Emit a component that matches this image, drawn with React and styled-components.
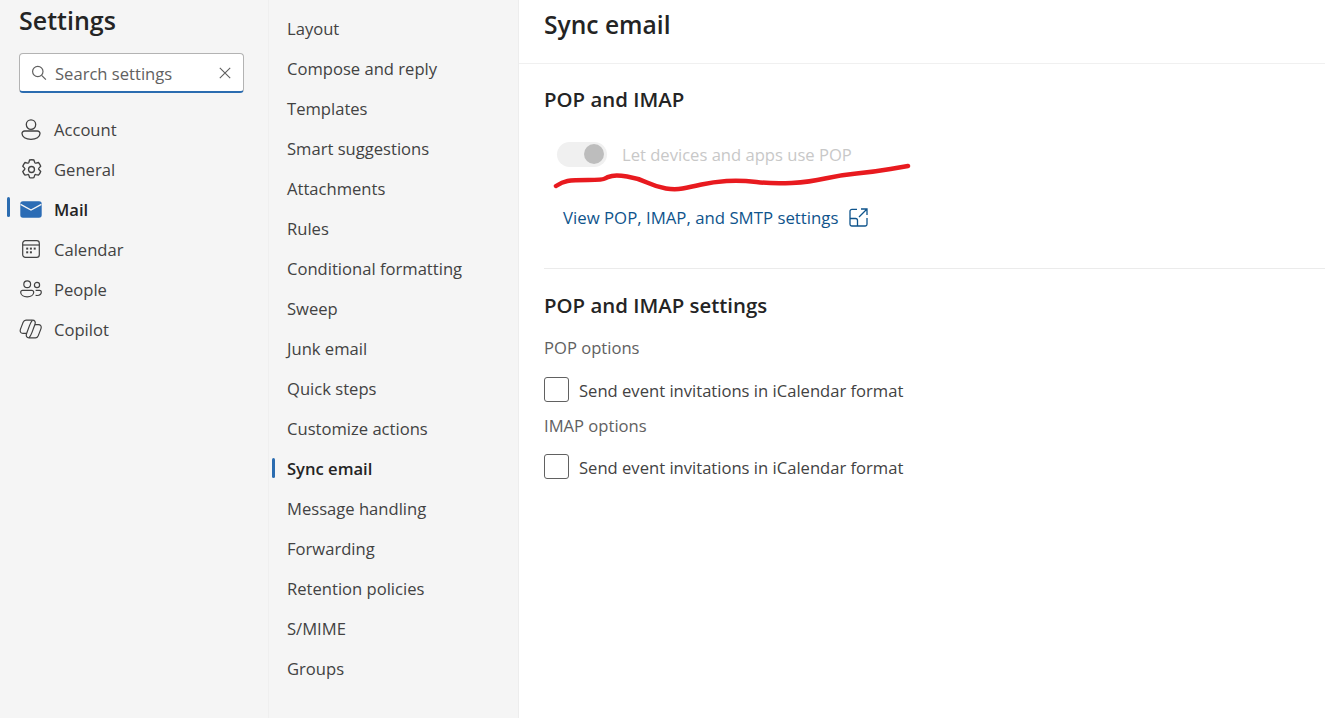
import styled, { createGlobalStyle } from 'styled-components';

const leftItems = [
  { label: 'Account', icon: <AccountIcon /> },
  { label: 'General', icon: <GearIcon /> },
  { label: 'Mail', icon: <MailIcon />, active: true },
  { label: 'Calendar', icon: <CalendarIcon /> },
  { label: 'People', icon: <PeopleIcon /> },
  { label: 'Copilot', icon: <CopilotIcon /> },
];

const midItems = [
  'Layout', 'Compose and reply', 'Templates', 'Smart suggestions', 'Attachments', 'Rules',
  'Conditional formatting', 'Sweep', 'Junk email', 'Quick steps', 'Customize actions',
  'Sync email', 'Message handling', 'Forwarding', 'Retention policies', 'S/MIME', 'Groups',
];

// hand drawn red line, points follow the marker stroke in the picture
const scribblePoints = [
  [6, 26], [12, 22], [23, 20], [53, 20], [57, 17], [67, 15], [87, 18], [107, 27], [125, 30],
  [140, 27], [163, 22], [190, 20], [223, 24], [260, 22], [290, 15], [323, 12], [358, 6],
];

function smoothPath(points) {
  let d = `M${points[0][0]} ${points[0][1]}`;
  for (let i = 1; i < points.length - 1; i++) {
    const mx = (points[i][0] + points[i + 1][0]) / 2;
    const my = (points[i][1] + points[i + 1][1]) / 2;
    d += `Q${points[i][0]} ${points[i][1]} ${mx} ${my}`;
  }
  const last = points[points.length - 1];
  return `${d}L${last[0]} ${last[1]}`;
}

function AccountIcon() {
  return (
    <svg width="20" height="21" viewBox="0 0 20 21" fill="none" stroke="#424242" strokeWidth="1.3">
      <circle cx="10" cy="5.6" r="4.7" />
      <path d="M3.6 12h12.8a2.6 2.6 0 0 1 2.6 2.6c0 3.4-3.8 5.7-9 5.7s-9-2.3-9-5.7A2.6 2.6 0 0 1 3.6 12z" />
    </svg>
  );
}

function GearIcon() {
  return (
    <svg width="23" height="23" viewBox="0 0 24 24" fill="none" stroke="#424242" strokeWidth="1.4" strokeLinejoin="round">
      <path d="M12.2 1.8c.8 0 1.6.1 2.3.3l.9 2.6c.2.5.8.8 1.3.6l2.6-.6c1 1.1 1.8 2.4 2.3 3.9l-1.9 2c-.4.4-.4 1 0 1.4l1.9 2c-.5 1.5-1.3 2.8-2.3 3.9l-2.6-.6c-.5-.2-1.1.1-1.3.6l-.9 2.6c-1.5.4-3 .4-4.5 0l-.8-2.6c-.2-.5-.8-.8-1.3-.6l-2.7.6c-1-1.1-1.8-2.4-2.3-3.9l1.9-2c.4-.4.4-1 0-1.4l-1.9-2c.5-1.5 1.3-2.8 2.3-3.9l2.7.6c.5.2 1.1-.1 1.3-.6l.8-2.6c.7-.2 1.4-.3 2.2-.3z" />
      <circle cx="12" cy="12" r="3.1" />
    </svg>
  );
}

function MailIcon() {
  return (
    <svg width="22" height="17" viewBox="0 0 22 17">
      <path fill="#2b6cb5" d="M3 .2h16A2.7 2.7 0 0 1 21.7 3v11a2.7 2.7 0 0 1-2.7 2.7H3A2.7 2.7 0 0 1 .3 14V3A2.7 2.7 0 0 1 3 .2z" />
      <path fill="none" stroke="#f5f5f5" strokeWidth="1.3" d="M.6 3.4 11 9l10.4-5.6" />
    </svg>
  );
}

function CalendarIcon() {
  return (
    <svg width="18" height="18" viewBox="0 0 18 18" fill="none" stroke="#424242" strokeWidth="1.2">
      <rect x=".7" y=".7" width="16.6" height="16.6" rx="2.6" />
      <path d="M.7 5h16.6" />
      <g fill="#424242" stroke="none">
        <rect x="7.9" y="7.6" width="2" height="2" />
        <rect x="11.7" y="7.6" width="2" height="2" />
        <rect x="4.2" y="7.6" width="2" height="2" />
        <rect x="4.2" y="11.3" width="2" height="2" />
        <rect x="7.9" y="11.3" width="2" height="2" />
      </g>
    </svg>
  );
}

function PeopleIcon() {
  return (
    <svg width="22" height="18" viewBox="0 0 22 18" fill="none" stroke="#424242" strokeWidth="1.2">
      <circle cx="7.2" cy="4.2" r="3.4" />
      <circle cx="17" cy="5" r="2.6" />
      <path d="M2.5 10.4h9.4a1.8 1.8 0 0 1 1.8 1.8c0 2.8-2.8 4.6-6.5 4.6S.7 15 .7 12.2a1.8 1.8 0 0 1 1.8-1.8z" />
      <path d="M15.6 15.4c.5.1 1 .1 1.5.1 2.8 0 4.2-1.5 4.2-3.4 0-1-.7-1.7-1.7-1.7h-4" />
    </svg>
  );
}

function CopilotIcon() {
  return (
    <svg width="24" height="20" viewBox="0 0 24 20" fill="none" stroke="#424242" strokeWidth="1.2" strokeLinejoin="round">
      <path d="M13.5 1.2H7C5.4 1.2 4.6 2.2 4 3.6L1.4 10.4C.6 12.6 1.8 14.4 4 14.4H7.5" />
      <path d="M13.5 1.2C15.8 1.2 16.8 3 16 5.2L13 13.4C12.2 15.6 11.5 17 10 18.8" />
      <path d="M10 18.8H16.5C18 18.8 18.8 17.8 19.4 16.4L22 9.6C22.8 7.4 21.6 5.6 19.4 5.6H16" />
      <path d="M10 18.8C7.7 18.8 6.7 17 7.5 14.8L10.5 6.6C11.3 4.4 12 3 13.5 1.2" />
    </svg>
  );
}

function SearchIcon() {
  return (
    <svg width="16" height="16" viewBox="0 0 16 16" fill="none" stroke="#5f5f5f" strokeWidth="1.2">
      <circle cx="6.8" cy="6.5" r="5.2" />
      <path d="m10.6 10.4 4.3 4.3" />
    </svg>
  );
}

function CloseIcon() {
  return (
    <svg width="12" height="12" viewBox="0 0 12 12" fill="none" stroke="#5f5f5f" strokeWidth="1.1">
      <path d="m.8.8 10.4 10.4M11.2.8.8 11.2" />
    </svg>
  );
}

function ExternalIcon() {
  return (
    <svg width="19" height="19" viewBox="0 0 19 19" fill="none" stroke="#0f548c" strokeWidth="1.3">
      <path d="M8 1.3H3A2 2 0 0 0 1 3.3v13A1.7 1.7 0 0 0 2.7 18h13.6a1.7 1.7 0 0 0 1.7-1.7V10" />
      <path d="M1 10.5h5.5a2 2 0 0 1 2 2V18" />
      <path d="M12 1h6v6M18 1l-8 8" />
    </svg>
  );
}

export default function App() {
  return (
    <>
      <GlobalStyle />
      <Page>
        <SideColumn>
          <SettingsTitle>Settings</SettingsTitle>
          <SearchBox>
            <SearchIcon />
            <SearchText>Search settings</SearchText>
            <CloseIcon />
          </SearchBox>
          <SideNav>
            {leftItems.map(item => (
              <SideItem key={item.label} $active={item.active}>
                <IconSlot>{item.icon}</IconSlot>
                {item.label}
              </SideItem>
            ))}
          </SideNav>
        </SideColumn>

        <MidColumn>
          {midItems.map(item => (
            <MidItem key={item} $active={item === 'Sync email'}>{item}</MidItem>
          ))}
        </MidColumn>

        <Content>
          <PageHeader>Sync email</PageHeader>
          <TopSection>
            <SectionTitle>POP and IMAP</SectionTitle>
            <ToggleRow>
              <Toggle><Knob /></Toggle>
              <ToggleLabel>Let devices and apps use POP</ToggleLabel>
            </ToggleRow>
            <Scribble width="365" height="36" viewBox="0 0 365 36">
              <path
                d={smoothPath(scribblePoints)}
                fill="none"
                stroke="#e81a1f"
                strokeWidth="4.5"
                strokeLinecap="round"
                strokeLinejoin="round"
              />
            </Scribble>
            <SettingsLink>
              View POP, IMAP, and SMTP settings
              <ExternalIcon />
            </SettingsLink>
          </TopSection>
          <LowerSection>
            <SectionTitle>POP and IMAP settings</SectionTitle>
            <OptionsLabel>POP options</OptionsLabel>
            <CheckRow>
              <CheckBox />
              Send event invitations in iCalendar format
            </CheckRow>
            <OptionsLabel $tight>IMAP options</OptionsLabel>
            <CheckRow>
              <CheckBox />
              Send event invitations in iCalendar format
            </CheckRow>
          </LowerSection>
        </Content>
      </Page>
    </>
  );
}

const GlobalStyle = createGlobalStyle`
  html, body {
    margin: 0;
    padding: 0;
    background: #fff;
    overflow: hidden;
  }

  body {
    font-family: "Open Sans", "Noto Sans", sans-serif;
    color: #242424;
  }
`;

const Page = styled.div`
  display: flex;
  height: 718px;
  width: 1325px;
  overflow: hidden;
`;

const SideColumn = styled.aside`
  width: 269px;
  flex: none;
  background: #f5f5f5;
  border-right: 1px solid #efefef;
  padding: 0 24px 0 19px;
  box-sizing: border-box;
`;

const SettingsTitle = styled.h1`
  margin: 0;
  height: 53px;
  line-height: 40px;
  font-size: 25px;
  font-weight: 600;
  color: #242424;
`;

const SearchBox = styled.div`
  display: flex;
  align-items: center;
  height: 40px;
  box-sizing: border-box;
  padding: 0 12px 0 11px;
  background: #fff;
  border: 1px solid #b3b3b3;
  border-bottom: 2px solid #2b6cb0;
  border-radius: 4px;
`;

const SearchText = styled.span`
  flex: 1;
  margin: 2px 0 0 8px;
  font-size: 16.6px;
  color: #616161;
`;

const SideNav = styled.nav`
  margin-top: 16px;
`;

const SideItem = styled.div`
  position: relative;
  display: flex;
  align-items: center;
  height: 40px;
  font-size: 16.6px;
  font-weight: ${p => (p.$active ? 600 : 400)};
  color: ${p => (p.$active ? '#242424' : '#424242')};

  &::before {
    content: '';
    display: ${p => (p.$active ? 'block' : 'none')};
    position: absolute;
    left: -12px;
    top: 8px;
    width: 3px;
    height: 20px;
    border-radius: 2px;
    background: #2b6cb0;
  }
`;

const IconSlot = styled.span`
  display: flex;
  justify-content: center;
  align-items: center;
  width: 24px;
  margin-right: 11px;
`;

const MidColumn = styled.nav`
  width: 250px;
  flex: none;
  background: #f5f5f5;
  border-right: 1px solid #ededed;
  box-sizing: border-box;
  padding: 9px 0 0 18px;
`;

const MidItem = styled.div`
  position: relative;
  height: 40px;
  line-height: 40px;
  font-size: 16.6px;
  font-weight: ${p => (p.$active ? 600 : 400)};
  color: ${p => (p.$active ? '#242424' : '#424242')};

  &::before {
    content: '';
    display: ${p => (p.$active ? 'block' : 'none')};
    position: absolute;
    left: -15px;
    top: 9px;
    width: 3px;
    height: 20px;
    border-radius: 2px;
    background: #2b6cb0;
  }
`;

const Content = styled.main`
  flex: 1;
  min-width: 0;
`;

const PageHeader = styled.h2`
  margin: 0;
  height: 63px;
  padding-left: 25px;
  line-height: 50px;
  font-size: 24.6px;
  font-weight: 600;
  border-bottom: 1px solid #f0f0f0;
`;

const TopSection = styled.section`
  position: relative;
  margin-left: 25px;
  height: 204px;
  border-bottom: 1px solid #ebebeb;
`;

const SectionTitle = styled.h3`
  margin: 0;
  padding-top: 20px;
  line-height: 30px;
  font-size: 20.4px;
  font-weight: 600;
`;

const ToggleRow = styled.div`
  display: flex;
  align-items: center;
  margin: 27px 0 0 13px;
  height: 26px;
`;

const Toggle = styled.div`
  display: flex;
  justify-content: flex-end;
  align-items: center;
  width: 50px;
  height: 25px;
  padding-right: 3px;
  box-sizing: border-box;
  border-radius: 13px;
  background: #f0f0f0;
`;

const Knob = styled.span`
  width: 20px;
  height: 20px;
  border-radius: 50%;
  background: #bdbdbd;
`;

const ToggleLabel = styled.span`
  margin-left: 15px;
  font-size: 16.6px;
  color: #c8c8c8;
`;

const Scribble = styled.svg`
  position: absolute;
  left: 6px;
  top: 96px;
`;

const SettingsLink = styled.a`
  display: flex;
  align-items: center;
  gap: 11px;
  margin: 37px 0 0 19px;
  height: 26px;
  font-size: 16.8px;
  color: #0f548c;
`;

const LowerSection = styled.section`
  margin-left: 25px;
  padding-top: 1px;
`;

const OptionsLabel = styled.div`
  height: ${p => (p.$tight ? '29px' : '30px')};
  line-height: 30px;
  margin-top: ${p => (p.$tight ? '8px' : '13px')};
  font-size: 16.6px;
  color: #616161;
`;

const CheckRow = styled.label`
  display: flex;
  align-items: center;
  gap: 10px;
  margin-top: 14px;
  height: 26px;
  font-size: 16.6px;
  color: #424242;
`;

const CheckBox = styled.span`
  width: 25px;
  height: 25px;
  margin-bottom: 2px;
  box-sizing: border-box;
  border: 1px solid #616161;
  border-radius: 3px;
  background: #fff;
`;
